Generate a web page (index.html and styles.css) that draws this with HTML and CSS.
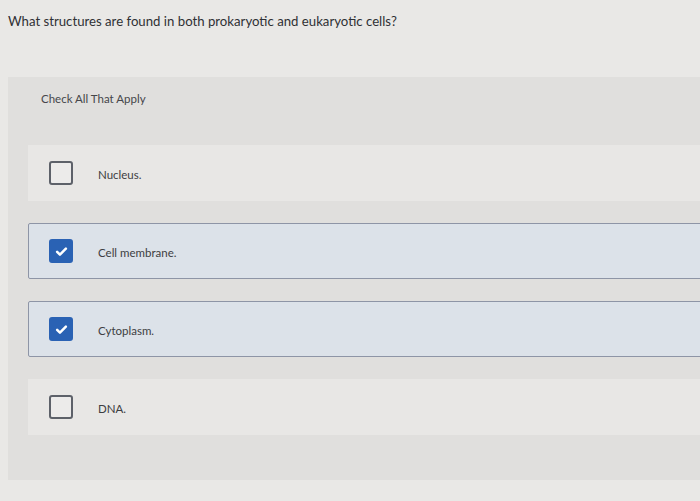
FILE: index.html
```html
<!DOCTYPE html>
<html lang="en">
<head>
  <meta charset="UTF-8">
  <title>Check All That Apply</title>
  <link rel="stylesheet" href="styles.css">
</head>
<body>
  <div class="question">What structures are found in both prokaryotic and eukaryotic cells?</div>
  <div class="panel">
    <div class="hint">Check All That Apply</div>
    <div class="options">
      <label class="option">
        <span class="box"></span>
        <span class="text">Nucleus.</span>
      </label>
      <label class="option checked">
        <span class="box"><svg viewBox="0 0 24 24" width="15" height="15"><path d="M5 12.5l4.5 4.5L19 7.5" fill="none" stroke="#fff" stroke-width="4" stroke-linecap="round" stroke-linejoin="round"/></svg></span>
        <span class="text">Cell membrane.</span>
      </label>
      <label class="option checked">
        <span class="box"><svg viewBox="0 0 24 24" width="15" height="15"><path d="M5 12.5l4.5 4.5L19 7.5" fill="none" stroke="#fff" stroke-width="4" stroke-linecap="round" stroke-linejoin="round"/></svg></span>
        <span class="text">Cytoplasm.</span>
      </label>
      <label class="option">
        <span class="box"></span>
        <span class="text">DNA.</span>
      </label>
    </div>
  </div>
</body>
</html>
```
FILE: styles.css
```css
html, body { margin: 0; padding: 0; height: 100%; overflow: hidden; background: #e9e8e6; font-family: Lato, "Open Sans", sans-serif; color: #3a3b3e; }
.question { padding: 13px 8px 0; font-size: 13.2px; height: 77px; box-sizing: border-box; color: #2f3034; }
.panel { margin: 0 -30px 0 8px; background: #e0dfdd; padding: 15px 0 45px 20px; }
.hint { font-size: 11.5px; padding-left: 13px; height: 53px; color: #45464a; }
.options { display: flex; flex-direction: column; gap: 22px; }
.option { display: flex; align-items: center; height: 56px; box-sizing: border-box; background: #e8e7e5; padding-left: 21px; }
.option.checked { background: #dce2e9; border: 1px solid #8e95a6; padding-left: 20px; border-radius: 2px; }
.box { width: 24px; height: 24px; box-sizing: border-box; border: 2px solid #5d6169; border-radius: 3px; background: #ecebea; display: flex; align-items: center; justify-content: center; }
.checked .box { background: #2a62b4; border-color: #2a62b4; }
.text { margin-left: 25px; padding-top: 3px; font-size: 11.5px; color: #3d3e42; }
```
